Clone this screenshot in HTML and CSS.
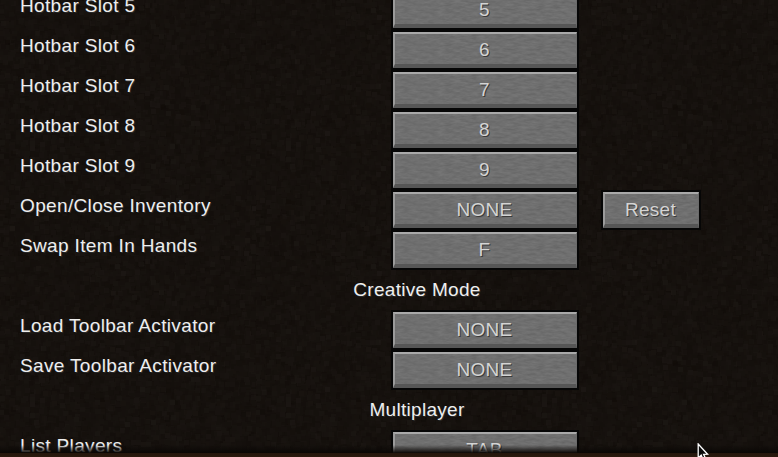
FILE: index.html
```html
<!DOCTYPE html>
<html lang="en">
<head>
<meta charset="utf-8">
<title>Controls</title>
<link rel="stylesheet" href="styles.css">
</head>
<body>
<div class="screen">
  <main class="list">
    <div class="row"><span class="label">Hotbar Slot 5</span><button class="key">5</button></div>
    <div class="row"><span class="label">Hotbar Slot 6</span><button class="key">6</button></div>
    <div class="row"><span class="label">Hotbar Slot 7</span><button class="key">7</button></div>
    <div class="row"><span class="label">Hotbar Slot 8</span><button class="key">8</button></div>
    <div class="row"><span class="label">Hotbar Slot 9</span><button class="key">9</button></div>
    <div class="row"><span class="label">Open/Close Inventory</span><button class="key">NONE</button><button class="key reset">Reset</button></div>
    <div class="row"><span class="label">Swap Item In Hands</span><button class="key">F</button></div>
    <div class="row section">Creative Mode</div>
    <div class="row"><span class="label">Load Toolbar Activator</span><button class="key">NONE</button></div>
    <div class="row"><span class="label">Save Toolbar Activator</span><button class="key">NONE</button></div>
    <div class="row section">Multiplayer</div>
    <div class="row"><span class="label">List Players</span><button class="key">TAB</button></div>
  </main>
  <div class="footer"></div>
  <svg class="cursor" viewBox="0 0 12 18" width="12" height="18" aria-hidden="true"><path d="M1.2 1 V15 L4.2 12.2 L6.4 17 L8.8 16 L6.6 11.4 L10.6 11.2 Z" fill="#0a0a0a" stroke="#ffffff" stroke-width="1.3"/></svg>
</div>
</body>
</html>
```
FILE: styles.css
```css
* { box-sizing: border-box; }
html, body { margin: 0; height: 100%; overflow: hidden; background: #15100c; }
.screen {
  position: relative;
  width: 778px;
  height: 457px;
  overflow: hidden;
  background-color: #16110d;
  background-image: url("data:image/svg+xml,%3Csvg xmlns='http://www.w3.org/2000/svg' width='256' height='256'%3E%3Cfilter id='p' x='0' y='0' width='100%25' height='100%25' color-interpolation-filters='sRGB'%3E%3CfeTurbulence type='fractalNoise' baseFrequency='0.8' numOctaves='2' seed='4' stitchTiles='stitch' result='n'/%3E%3CfeFlood x='2' y='2' width='1' height='1'/%3E%3CfeOffset/%3E%3CfeTile result='t'/%3E%3CfeComposite in='n' in2='t' operator='in'/%3E%3CfeMorphology operator='dilate' radius='2'/%3E%3CfeColorMatrix values='0.09 0 0 0 0.03 0.09 0 0 0 0.012 0.09 0 0 0 -0.002 0 0 0 0 1'/%3E%3C/filter%3E%3Crect width='256' height='256' filter='url(%23p)'/%3E%3C/svg%3E");
  font-family: "Liberation Sans", Arial, sans-serif;
  font-size: 19px;
  color: #eeeeee;
  text-shadow: 1px 1px 0 #2a2a2a;
}
.list { margin-top: -10px; padding-left: 20px; }
.row { display: flex; align-items: center; height: 40px; }
.label { width: 373px; margin-top: -9px; letter-spacing: 0.35px; }
.section { justify-content: center; width: 794px; letter-spacing: 0.3px; }
.key {
  width: 184px;
  height: 36px;
  margin: 0;
  padding: 2px 2px 0 0;
  border: 0;
  border-top: 2px solid #a9a9a9;
  border-left: 2px solid #9a9a9a;
  border-right: 1px solid #6a6a6a;
  border-bottom: 4px solid #565656;
  outline: 2px solid #060606;
  background-color: #6e6e6e;
  background-image: url("data:image/svg+xml,%3Csvg xmlns='http://www.w3.org/2000/svg' width='200' height='40'%3E%3Cfilter id='s' x='0' y='0' width='100%25' height='100%25' color-interpolation-filters='sRGB'%3E%3CfeTurbulence type='fractalNoise' baseFrequency='0.12 0.4' numOctaves='3' seed='7'/%3E%3CfeColorMatrix values='0.1 0 0 0 0.385 0.1 0 0 0 0.385 0.1 0 0 0 0.385 0 0 0 0 1'/%3E%3C/filter%3E%3Crect width='200' height='40' filter='url(%23s)'/%3E%3C/svg%3E");
  font: inherit;
  color: #d4d4d4;
  text-shadow: 1px 1px 0 #3a3a3a;
  letter-spacing: 0.3px;
}
.reset { width: 96px; margin-left: 26px; }
.footer {
  position: absolute;
  left: 0;
  right: 0;
  bottom: 0;
  height: 12px;
  background: linear-gradient(#0a070500 0, #0a0705 8px, #24160c 8px, #2b1a0e 100%);
}
.cursor { position: absolute; left: 697px; top: 443px; }
```
